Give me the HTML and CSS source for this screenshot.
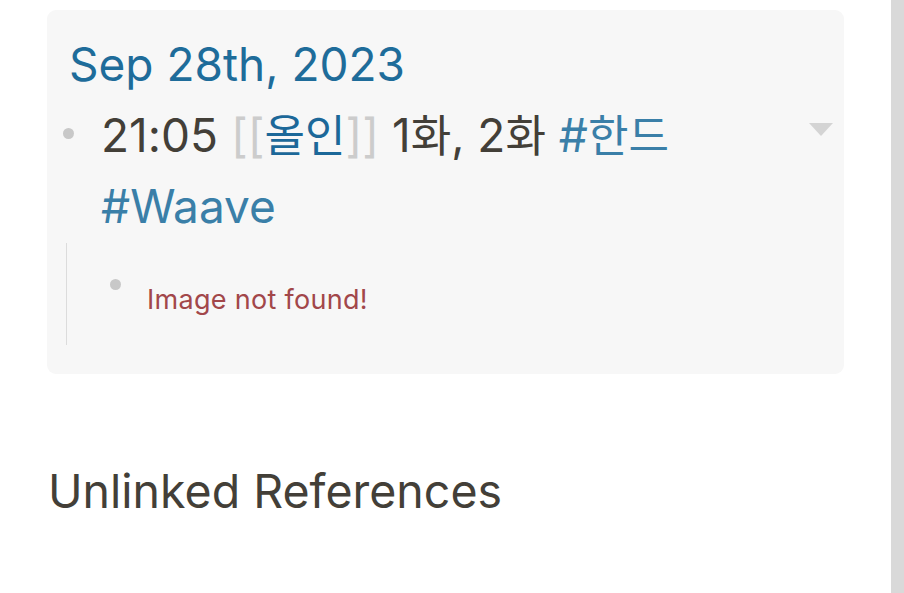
FILE: index.html
```html
<!DOCTYPE html>
<html>
<head>
<meta charset="utf-8">
<link rel="stylesheet" href="styles.css">
</head>
<body>
<div class="page">
  <div class="main">
    <div class="card">
      <div class="date">Sep 28th, 2023</div>
      <div class="block">
        <div class="bullet-col"><span class="bullet"></span></div>
        <div class="content">
          <span class="time">21:05</span> <span class="br">[[</span><span class="ref ko">올인</span><span class="br">]]</span> 1<span class="ko">화</span>, 2<span class="ko">화</span> <span class="tag">#<span class="ko">한드</span></span> <span class="tag">#Waave</span>
        </div>
        <div class="toggle"><svg width="26" height="16" viewBox="0 0 26 16"><path d="M1 2 L25 2 L13 15 Z" fill="#d4d4d4"/></svg></div>
      </div>
      <div class="children">
        <div class="child">
          <div class="cbullet-col"><span class="cbullet"></span></div>
          <div class="err">Image not found!</div>
        </div>
      </div>
    </div>
    <h2 class="unlinked">Unlinked References</h2>
  </div>
  <div class="scrollbar"></div>
</div>
</body>
</html>
```
FILE: styles.css
```css
html, body { margin: 0; padding: 0; background: #fff; }
body { font-family: Inter, "Noto Sans CJK KR", sans-serif; color: #433f38; }
.page { display: flex; width: 904px; height: 593px; overflow: hidden; }
.main { flex: 1; padding: 10px 47px 0 47px; }
.scrollbar { width: 13px; background: #d9d9d9; }
.card { background: #f7f7f7; border-radius: 9px; height: 364px; box-sizing: border-box; padding-top: 26px; }
.date { font-size: 46px; line-height: 56px; color: #1e6c9a; padding-left: 22px; }
.block { display: flex; margin-top: 8px; }
.bullet-col { width: 54px; flex: none; padding-left: 16px; box-sizing: border-box; padding-top: 28px; }
.bullet { display: block; width: 11px; height: 11px; border-radius: 50%; background: #c8c8c8; }
.content { flex: 1; font-size: 46px; line-height: 70px; }
.ko { font-size: 44px; }
.br { color: #cccccc; }
.ref { color: #1c6899; }
.tag { color: #3a7fa8; }
.toggle { flex: none; width: 120px; display: flex; justify-content: flex-end; padding-right: 10px; padding-top: 21px; box-sizing: border-box; }
.children { margin-left: 19px; border-left: 1px solid #dcdcdc; height: 102px; margin-top: 2px; display: flex; flex-direction: column; justify-content: center; }
.child { display: flex; padding-top: 6px; }
.cbullet-col { width: 80px; flex: none; padding-left: 43px; box-sizing: border-box; }
.cbullet { display: block; width: 11px; height: 11px; border-radius: 50%; background: #c8c8c8; margin-top: 2px; }
.err { font-size: 27px; letter-spacing: 0.3px; color: #a2474a; padding-top: 5px; line-height: 36px; }
.unlinked { font-size: 46.5px; font-weight: 400; margin: 87px 0 0 1px; line-height: 60px; color: #433f38; }
```
